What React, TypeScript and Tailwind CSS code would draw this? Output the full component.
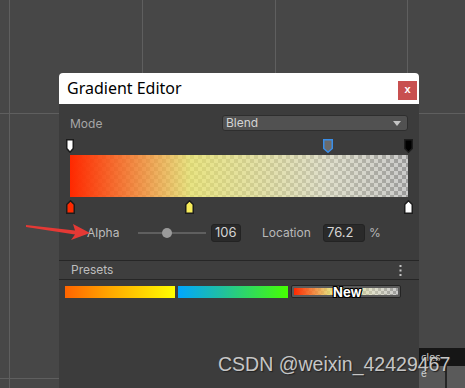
import React from "react";

const alphaMarkers = [
  { pct: 0, fill: "#ffffff", stroke: "#1c1c1c", w: 8 },
  { pct: 76.2, fill: "#6b6b6b", stroke: "#3a8ee8", w: 10 },
  { pct: 100, fill: "#000000", stroke: "#1c1c1c", w: 9 },
];

const colorMarkers = [
  { pct: 0, fill: "#ff2a00" },
  { pct: 35.5, fill: "#f7ec5a" },
  { pct: 100, fill: "#ffffff" },
];

function TopMarker({ fill, stroke, w }: { fill: string; stroke: string; w: number }) {
  return (
    <svg width={w} height={14} viewBox={`0 0 ${w} 14`}>
      <path
        d={`M0.75 0.75 H${w - 0.75} V9.5 L${w / 2} 13.2 L0.75 9.5 Z`}
        fill={fill}
        stroke={stroke}
        strokeWidth={1.5}
      />
    </svg>
  );
}

function BottomMarker({ fill }: { fill: string }) {
  return (
    <svg width={9} height={14} viewBox="0 0 9 14">
      <path d="M4.5 0.8 L8.25 4.5 V13.25 H0.75 V4.5 Z" fill={fill} stroke="#1c1c1c" strokeWidth={1.5} />
    </svg>
  );
}

export default function App() {
  return (
    <div className="relative w-[465px] h-[388px] overflow-hidden bg-[#474747] font-['Inter','Noto_Sans',sans-serif]">
      {/* background grid */}
      <div className="absolute left-[9px] top-0 w-px h-full bg-[#5f5f5f]" />
      <div className="absolute left-[142px] top-0 w-px h-full bg-[#5f5f5f]" />
      <div className="absolute left-[275px] top-0 w-px h-full bg-[#5f5f5f]" />
      <div className="absolute left-[407px] top-0 w-px h-full bg-[#5f5f5f]" />
      <div className="absolute left-0 top-[113px] w-full h-px bg-[#5f5f5f]" />
      <div className="absolute left-0 top-[378px] w-full h-px bg-[#5f5f5f]" />

      {/* bottom-right panel */}
      <div className="absolute left-[419px] top-[348px] w-[46px] h-[40px] flex flex-col">
        <div className="h-[18px] bg-[#161616] text-[11px] text-[#c4c4c4] leading-[18px] pl-[2px] font-['Noto_Sans',sans-serif]">
          cles
        </div>
        <div className="flex-1 flex gap-[2px] bg-[#262626]">
          <div className="w-[26px] bg-[#575757] text-[10px] leading-[14px] text-[#d0d0d0] pl-[2px]">e</div>
          <div className="flex-1 bg-[#5a5a5a]" />
        </div>
      </div>

      {/* window */}
      <div className="absolute left-[59px] top-[73px] w-[360px] h-[320px] bg-[#3c3c3c] rounded-t-[4px] flex flex-col">
        <div className="h-[31px] bg-white rounded-t-[4px] flex items-center justify-between pl-[8px] pr-[2px]">
          <span className="font-['Noto_Sans',sans-serif] text-[16px] text-black leading-none mt-[-2px]">
            Gradient Editor
          </span>
          <div className="w-[19px] h-[19px] bg-[#c85050] flex items-center justify-center mt-[3px]">
            <span className="text-white text-[11px] font-bold leading-none font-['Liberation_Sans',sans-serif] mt-[-1px]">x</span>
          </div>
        </div>

        <div className="flex flex-col pt-[11px] px-[11px]">
          <div className="h-[16px] flex items-center justify-between">
            <span className="text-[12px] text-[#a6a6a6] mt-[2px]">Mode</span>
            <div className="w-[186px] h-[16px] rounded-[3px] bg-[#515151] border border-[#2e2e2e] flex items-center justify-between pl-[3px] pr-[6px]">
              <span className="text-[12px] text-[#d4d4d4] leading-none">Blend</span>
              <svg width={8} height={5} viewBox="0 0 8 5">
                <path d="M0 0 H8 L4 5 Z" fill="#c4c4c4" />
              </svg>
            </div>
          </div>

          <div className="relative mt-[8px] h-[14px] w-[338px]">
            {alphaMarkers.map((m, i) => (
              <div key={i} className="absolute top-0" style={{ left: `calc(${m.pct}% - ${m.w / 2}px)` }}>
                <TopMarker fill={m.fill} stroke={m.stroke} w={m.w} />
              </div>
            ))}
          </div>

          <div className="relative mt-[2px] h-[42px] w-[338px] bg-[repeating-conic-gradient(#cbcbcb_0_25%,#9c9c9c_0_50%)] [background-size:8px_8px]">
            <div className="absolute inset-0 bg-[linear-gradient(to_right,rgba(255,40,0,1)_0%,rgba(242,236,106,0.74)_35.5%,rgba(249,248,202,0.42)_76.2%,rgba(255,255,255,0)_100%)]" />
          </div>

          <div className="relative mt-[3px] h-[14px] w-[338px]">
            {colorMarkers.map((m, i) => (
              <div key={i} className="absolute top-0" style={{ left: `calc(${m.pct}% - 4.5px)` }}>
                <BottomMarker fill={m.fill} />
              </div>
            ))}
          </div>

          <div className="mt-[10px] h-[18px] flex items-center pl-[17px] text-[12px]">
            <span className="w-[51px] text-[#bdbdbd]">Alpha</span>
            <div className="relative w-[68px] h-[10px] flex items-center">
              <div className="w-full h-[2px] bg-[#5f5f5f]" />
              <div className="absolute left-[24px] top-0 w-[10px] h-[10px] rounded-full bg-[#9a9a9a]" />
            </div>
            <div className="ml-[5px] w-[30px] h-[18px] rounded-[3px] bg-[#2a2a2a] border border-[#232323] flex items-center pl-[3px] text-[13px] text-[#d4d4d4]">
              106
            </div>
            <span className="ml-[21px] w-[61px] text-[#b9b9b9]">Location</span>
            <div className="w-[42px] h-[18px] rounded-[3px] bg-[#2a2a2a] border border-[#232323] flex items-center pl-[3px] text-[13px] text-[#d4d4d4]">
              76.2
            </div>
            <span className="ml-[4px] text-[#b9b9b9]">%</span>
          </div>
        </div>

        <div className="mt-[18px] h-[20px] border-t border-b border-[#262626] bg-[#3e3e3e] flex items-center justify-between pl-[12px] pr-[17px]">
          <span className="text-[12px] text-[#bdbdbd]">Presets</span>
          <svg width={3} height={11} viewBox="0 0 3 11">
            <rect x={0.5} y={0} width={2} height={2} fill="#c4c4c4" />
            <rect x={0.5} y={4.5} width={2} height={2} fill="#c4c4c4" />
            <rect x={0.5} y={9} width={2} height={2} fill="#c4c4c4" />
          </svg>
        </div>

        <div className="mt-[5px] pl-[6px] flex gap-[3px] items-start">
          <div className="mt-[1px] w-[110px] h-[12px] bg-[linear-gradient(to_right,#ff6400,#ffa600_40%,#ffff00)]" />
          <div className="mt-[1px] w-[110px] h-[12px] bg-[linear-gradient(to_right,#00a6ff,#20c0a0_40%,#46ff00)]" />
          <div className="relative w-[110px] h-[13px] rounded-[2px] bg-[#5a5a5a] border border-[#242424] p-[2px]">
            <div className="relative w-full h-full bg-[repeating-conic-gradient(#cbcbcb_0_25%,#9c9c9c_0_50%)] [background-size:6px_6px]">
              <div className="absolute inset-0 bg-[linear-gradient(to_right,rgba(255,40,0,1)_0%,rgba(242,236,106,0.74)_35.5%,rgba(249,248,202,0.42)_76.2%,rgba(255,255,255,0)_100%)]" />
            </div>
            <span className="absolute left-[41px] top-[-3px] text-[13px] font-bold text-white leading-[18px] [text-shadow:1px_0_0_#000,-1px_0_0_#000,0_1px_0_#000,0_-1px_0_#000,1px_1px_0_#000,-1px_-1px_0_#000,1px_-1px_0_#000,-1px_1px_0_#000]">
              New
            </span>
          </div>
        </div>
      </div>

      {/* red arrow */}
      <svg className="absolute left-0 top-0" width={465} height={388} viewBox="0 0 465 388">
        <polygon points="26,225 75,230.5 73,224 90,233 71,240 75,234.5 26,227" fill="#e53935" />
      </svg>

      {/* watermark */}
      <div className="absolute left-[218px] top-[355px] text-[19.5px] leading-none text-[#c6c6c6] font-['Liberation_Sans',sans-serif] [text-shadow:1px_1px_1px_#222]">
        CSDN @weixin_42429467
      </div>
    </div>
  );
}
